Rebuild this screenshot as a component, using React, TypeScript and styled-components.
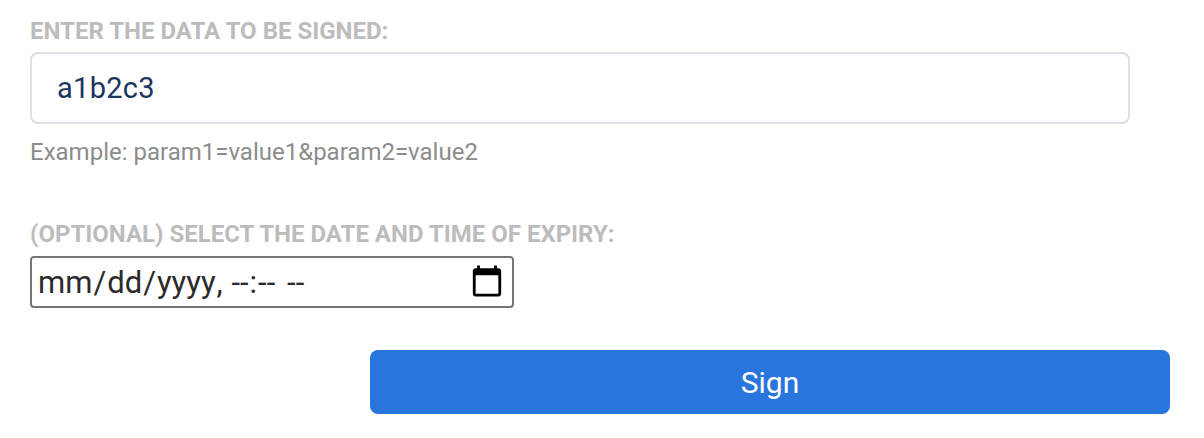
import React from "react";
import styled, { createGlobalStyle } from "styled-components";

const GlobalStyle = createGlobalStyle`
  html, body {
    margin: 0;
    padding: 0;
    background: #fff;
  }
`;

const Form = styled.form`
  box-sizing: border-box;
  width: 1204px;
  height: 438px;
  padding: 19px 34px 0 30px;
  display: flex;
  flex-direction: column;
  font-family: Roboto, sans-serif;
`;

const Label = styled.label`
  display: block;
  font-size: 24px;
  line-height: 24px;
  font-weight: 700;
  color: #bcbcbc;
  text-transform: uppercase;
`;

const TextInput = styled.input`
  box-sizing: border-box;
  display: block;
  width: 1100px;
  height: 72px;
  margin-top: 9px;
  padding: 0 25px;
  border: 2px solid #dde0ea;
  border-radius: 8px;
  outline: none;
  background: #fff;
  font-family: inherit;
  font-size: 29px;
  letter-spacing: 0.3px;
  color: #1a3560;
`;

const Hint = styled.p`
  margin: 14px 0 0;
  font-size: 24px;
  line-height: 28px;
  color: #8c8c8c;
`;

const DateLabel = styled(Label)`
  margin-top: 56px;
`;

const DateInput = styled.input`
  box-sizing: border-box;
  display: block;
  width: 484px;
  height: 52px;
  margin-top: 10px;
  padding: 0 5px;
  border: 2px solid #767676;
  border-radius: 4px;
  outline: none;
  background: #fff;
  font-family: inherit;
  font-size: 31px;
  color: #2b2b2b;

  &::-webkit-datetime-edit-ampm-field {
    margin-left: 6px;
  }

  &::-webkit-calendar-picker-indicator {
    width: 36px;
    height: 36px;
    padding: 0;
    margin: 0 2px 0 0;
  }
`;

const SubmitButton = styled.button`
  align-self: flex-end;
  width: 800px;
  height: 64px;
  margin-top: 42px;
  border: none;
  border-radius: 8px;
  background: #2975de;
  font-family: inherit;
  font-size: 30px;
  color: #fff;
`;

export default function App() {
  return (
    <>
      <GlobalStyle />
      <Form onSubmit={e => e.preventDefault()}>
        <Label htmlFor="data">Enter the data to be signed:</Label>
        <TextInput id="data" type="text" defaultValue="a1b2c3" />
        <Hint>Example: param1=value1&amp;param2=value2</Hint>
        <DateLabel htmlFor="expiry">
          (Optional) Select the date and time of expiry:
        </DateLabel>
        <DateInput id="expiry" type="datetime-local" />
        <SubmitButton type="submit">Sign</SubmitButton>
      </Form>
    </>
  );
}
